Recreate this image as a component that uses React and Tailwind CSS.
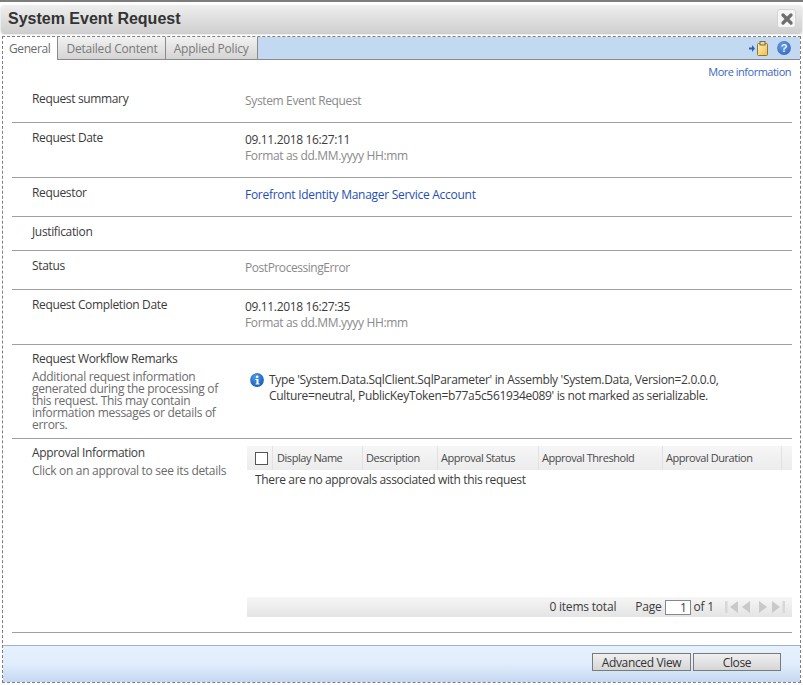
import React from "react";
import { X } from "lucide-react";

const Row = ({ label, desc, height, children, labelTop = "pt-[7px]", valueTop = "pt-[9px]", descTop = "mt-[4px]" }) => (
  <div className={`flex shrink-0 border-b border-[#a0a0a0] ${height}`}>
    <div className={`w-[233px] shrink-0 pl-[20px] ${labelTop}`}>
      <div className="text-[#3b3b3b] leading-[16px]">{label}</div>
      {desc && <div className={`text-[#6b6b6b] leading-[12px] tracking-[-0.3px] w-[192px] ${descTop}`}>{desc}</div>}
    </div>
    <div className={`flex-1 ${valueTop}`}>{children}</div>
  </div>
);

const DateValue = ({ value }) => (
  <div className="leading-[16px]">
    <div className="text-[#3b3b3b]">{value}</div>
    <div className="text-[#8a8a8a]">Format as dd.MM.yyyy HH:mm</div>
  </div>
);

const Tab = ({ children, active, className = "px-[8px]" }) =>
  active ? (
    <div className="h-[23px] pl-[6px] pr-[7px] bg-white border-r border-[#8a8a8a] text-[#6b6b6b] leading-[24px] tracking-[-0.4px]">{children}</div>
  ) : (
    <div className={`h-[23px] bg-gradient-to-b from-[#f2f2f2] to-[#d4d4d4] border-r border-b border-[#8a8a8a] text-[#7a7a7a] leading-[24px] tracking-[-0.2px] ${className}`}>
      {children}
    </div>
  );

const columns = [
  ["Display Name", "w-[90px] pl-[4px]"],
  ["Description", "w-[75px] pl-[3px]"],
  ["Approval Status", "w-[101px] pl-[3px]"],
  ["Approval Threshold", "w-[124px] pl-[3px]"],
  ["Approval Duration", "w-[119px] pl-[3px]"],
];

const PagerIcon = ({ width, children }) => (
  <svg width={width} height="14" viewBox={`0 0 ${width} 14`} fill="#c9c9c9">
    {children}
  </svg>
);

export default function App() {
  return (
    <div className="w-[803px] h-[685px] bg-white overflow-hidden text-[12px] font-['Open_Sans','Liberation_Sans',sans-serif] tracking-[-0.35px]">
      <div className="h-[2px] bg-[#7d7d7d]" />
      <div className="h-[3px]" />
      <div className="h-[28px] mx-[1px] flex items-center justify-between rounded-[3px] pl-[7px] pr-[6px] bg-gradient-to-b from-[#efefef] to-[#cfcfcf] shadow-[0_1px_2px_#bbb]">
        <span className="text-[16px] font-bold text-[#333] font-['Liberation_Sans',sans-serif] tracking-normal">System Event Request</span>
        <div className="w-[19px] h-[19px] mb-[1px] bg-[#f6f6f6] border border-[#d4d4d4] rounded-[3px] flex items-center justify-center">
          <X size={16} strokeWidth={5} color="#6f6f6f" className="shrink-0" />
        </div>
      </div>
      <div className="h-[3px]" />
      <div className="mx-[2px] h-[647px] border border-dashed border-[#7d7d7d] flex flex-col">
        <div className="h-[23px] shrink-0 flex bg-[#c3d8f1]">
          <Tab active>General</Tab>
          <Tab className="pl-[8px] pr-[7px]">Detailed Content</Tab>
          <Tab>Applied Policy</Tab>
          <div className="flex-1 border-b border-[#8a8a8a] flex items-center justify-end gap-[9px] pr-[9px]">
            <svg width="19" height="15" viewBox="0 0 19 15">
              <defs>
                <linearGradient id="clip" x1="0" y1="0" x2="1" y2="1">
                  <stop offset="0" stopColor="#fdf0b8" />
                  <stop offset="1" stopColor="#eebd4e" />
                </linearGradient>
              </defs>
              <path d="M0 6.5h3V4l3 3.5L3 11V8.5H0z" fill="#2a62b8" />
              <rect x="8.5" y="2.5" width="10" height="12" rx="1" fill="url(#clip)" stroke="#94752c" />
              <rect x="11" y="0.5" width="5" height="3.5" fill="#e8d9a8" stroke="#7d6a38" />
            </svg>
            <svg width="14" height="14" viewBox="0 0 14 14">
              <defs>
                <radialGradient id="help" cx="0.4" cy="0.35" r="0.75">
                  <stop offset="0" stopColor="#6c9ce0" />
                  <stop offset="1" stopColor="#2f68bd" />
                </radialGradient>
              </defs>
              <circle cx="7" cy="7" r="6.9" fill="url(#help)" />
              <text x="7" y="11" textAnchor="middle" fontSize="11" fontWeight="700" fill="#e8f0fb" fontFamily="Liberation Sans">?</text>
            </svg>
          </div>
        </div>
        <div className="flex-1 flex flex-col pl-[9px] pr-[8px] min-h-0">
          <div className="h-[18px] mt-[4px] text-right leading-[16px] pr-[1px] text-[11px] tracking-[-0.5px] text-[#3a67c0]">More information</div>
          <div className="h-[9px] shrink-0" />
          <Row label="Request summary" height="h-[32px]" labelTop="pt-0" valueTop="pt-[2px]">
            <div className="text-[#8a8a8a] leading-[16px]">System Event Request</div>
          </Row>
          <Row label="Request Date" height="h-[55px]">
            <DateValue value="09.11.2018 16:27:11" />
          </Row>
          <Row label="Requestor" height="h-[39px]">
            <div className="text-[#1f4fb4] leading-[16px] tracking-[-0.28px]">Forefront Identity Manager Service Account</div>
          </Row>
          <Row label="Justification" height="h-[34px]" />
          <Row label="Status" height="h-[39px]">
            <div className="text-[#8a8a8a] leading-[16px] tracking-[-0.45px]">PostProcessingError</div>
          </Row>
          <Row label="Request Completion Date" height="h-[55px]">
            <DateValue value="09.11.2018 16:27:35" />
          </Row>
          <Row
            label="Request Workflow Remarks"
            height="h-[94px]"
            labelTop="pt-[6px]"
            valueTop="pt-[27px]"
            desc={
              <>
                Additional request information generated during the processing of this request. This may contain information messages or details of errors.
              </>
            }
          >
            <div className="flex pl-[5px] gap-[5px]">
              <svg width="14" height="14" viewBox="0 0 14 14" className="shrink-0 mt-[1px]">
                <defs>
                  <radialGradient id="info" cx="0.4" cy="0.3" r="0.8">
                    <stop offset="0" stopColor="#4f9be8" />
                    <stop offset="1" stopColor="#0f56b0" />
                  </radialGradient>
                </defs>
                <circle cx="7" cy="7" r="6.9" fill="url(#info)" />
                <path d="M5.5 6h3v4.5h1v1h-4v-1h1V7h-1z" fill="#fff" />
                <circle cx="7.2" cy="3.8" r="1.3" fill="#fff" />
              </svg>
              <div className="text-[#3b3b3b] leading-[16px] w-[480px] tracking-[-0.33px]">
                Type 'System.Data.SqlClient.SqlParameter' in Assembly 'System.Data, Version=2.0.0.0, Culture=neutral, PublicKeyToken=b77a5c561934e089' is not marked as serializable.
              </div>
            </div>
          </Row>
          <Row
            label="Approval Information"
            height="h-[194px]"
            labelTop="pt-[6px]"
            valueTop="pt-[7px]"
            descTop="mt-[2px]"
            desc={<span className="block w-[210px] leading-[16px] whitespace-nowrap">Click on an approval to see its details</span>}
          >
            <div className="h-[171px] ml-[2px] flex flex-col">
              <div className="h-[24px] flex items-center bg-gradient-to-b from-[#f6f6f6] to-[#ececec] text-[#4a4a4a] text-[11px] tracking-[-0.45px]">
                <div className="w-[26px] h-full shrink-0 flex items-center pl-[8px] border-r border-[#e2e2e2]">
                  <div className="w-[13px] h-[13px] bg-white border border-[#555]" />
                </div>
                {columns.map(([name, cls]) => (
                  <div key={name} className={`h-full flex items-center border-r border-[#e2e2e2] ${cls}`}>{name}</div>
                ))}
              </div>
              <div className="pl-[8px] pt-[2px] leading-[16px] text-[#3b3b3b]">There are no approvals associated with this request</div>
              <div className="flex-1" />
              <div className="h-[20px] flex items-center justify-end pr-[7px] bg-gradient-to-b from-[#f6f6f6] to-[#e4e4e4] text-[#3b3b3b] tracking-[-0.2px]">
                <span className="mr-[19px]">0 items total</span>
                <span className="mr-[3px]">Page</span>
                <div className="w-[26px] h-[15px] bg-white border border-[#888] text-right pr-[3px] leading-[14px] mr-[3px]">1</div>
                <span className="mr-[11px]">of 1</span>
                <div className="flex">
                  <PagerIcon width={13}>
                    <rect x="0" y="1" width="2.5" height="12" fill="#d8d8d8" />
                    <path d="M13 1v12L5 7z" />
                  </PagerIcon>
                  <div className="w-[4px]" />
                  <PagerIcon width={8}>
                    <path d="M8 1v12L0 7z" />
                  </PagerIcon>
                  <div className="w-[9px]" />
                  <PagerIcon width={8}>
                    <path d="M0 1v12l8-6z" />
                  </PagerIcon>
                  <div className="w-[5px]" />
                  <PagerIcon width={13}>
                    <path d="M0 1v12l8-6z" />
                    <rect x="10.5" y="1" width="2.5" height="12" fill="#d8d8d8" />
                  </PagerIcon>
                </div>
              </div>
            </div>
          </Row>
        </div>
        <div className="h-[37px] shrink-0 border-t border-[#9fb3cf] bg-gradient-to-b from-[#e6f1fd] via-[#e0edfc] to-[#c5d8f1] flex items-start pt-[7px] justify-end gap-[2px] pr-[19px]">
          <button className="w-[99px] h-[18px] bg-gradient-to-b from-[#f0f0f0] to-[#d6d6d6] border border-[#7a7a7a] text-[#333] leading-[15px]">Advanced View</button>
          <button className="w-[88px] h-[18px] bg-gradient-to-b from-[#f0f0f0] to-[#d6d6d6] border border-[#7a7a7a] text-[#333] leading-[15px]">Close</button>
        </div>
      </div>
    </div>
  );
}
